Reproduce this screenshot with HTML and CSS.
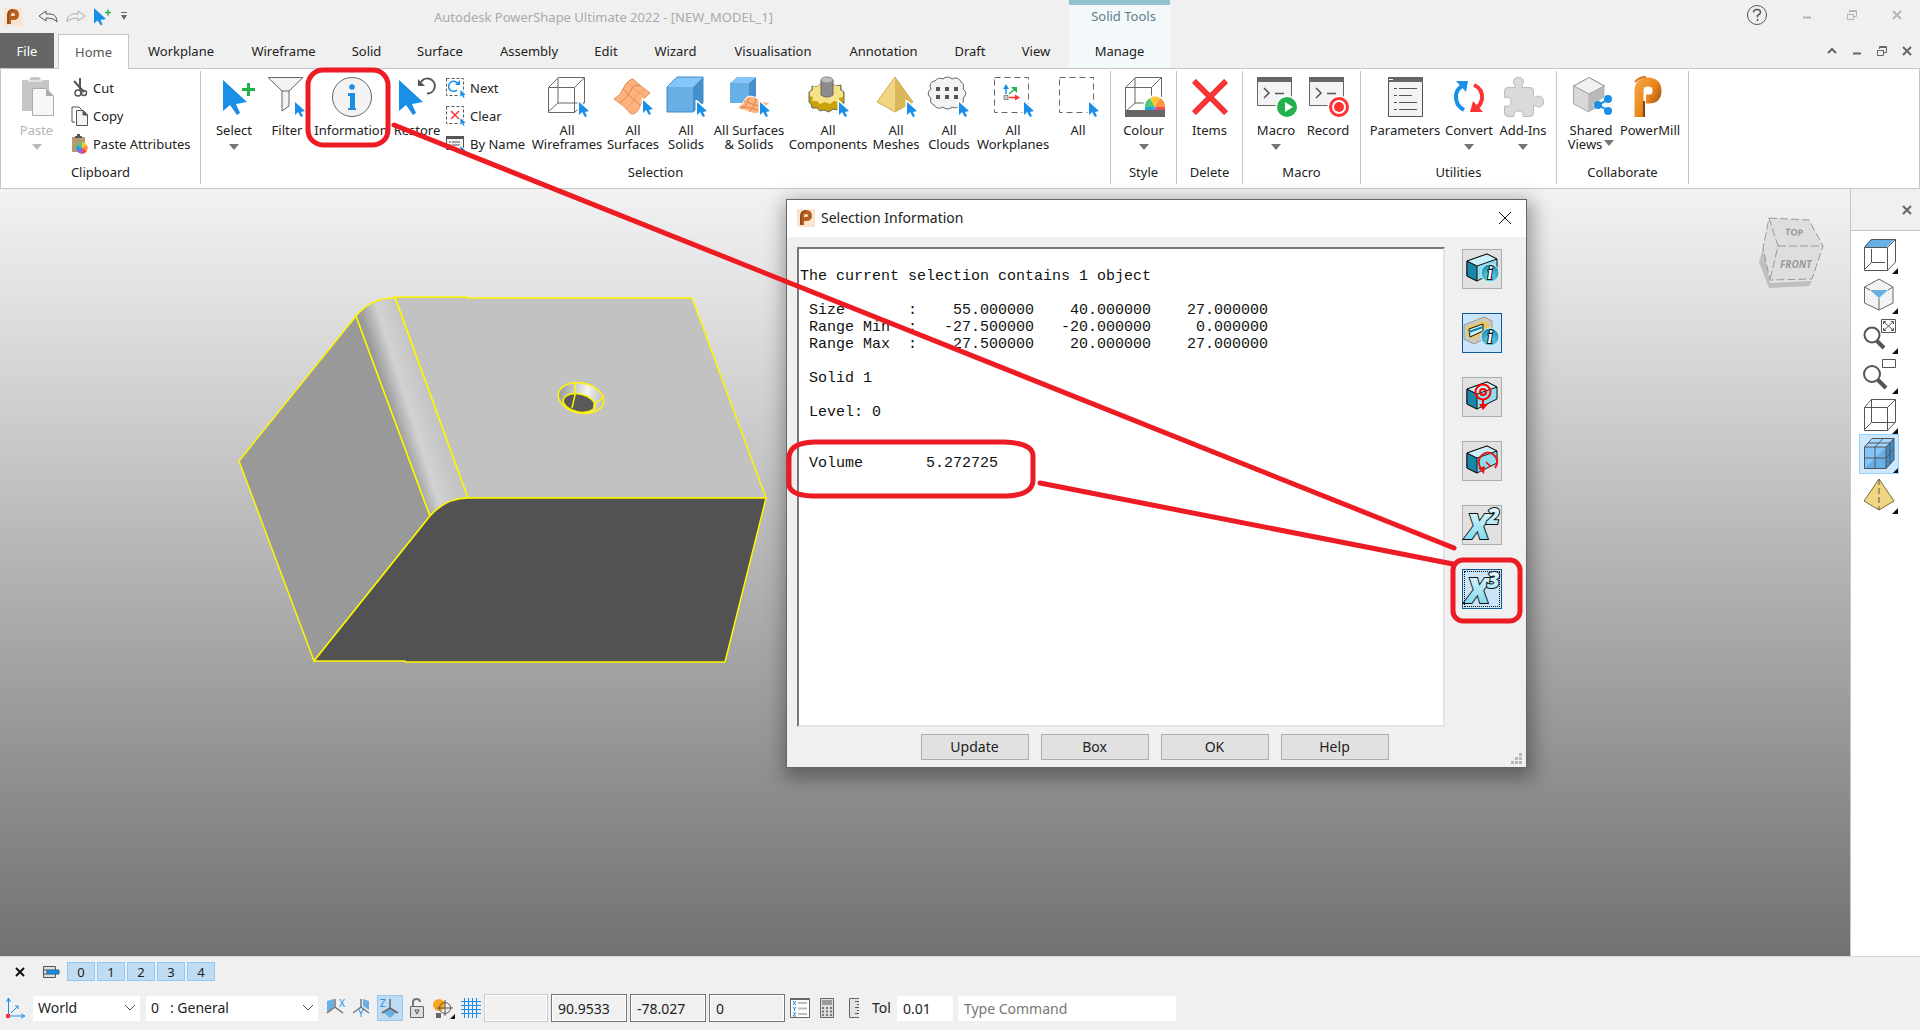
FILE: index.html
```
<!DOCTYPE html>
<html lang="en">
<head>
    <meta charset="UTF-8">
    <meta name="viewport" content="width=device-width, initial-scale=1.0">
    <title>Autodesk PowerShape Ultimate 2022 - [NEW_MODEL_1]</title>
    <link rel="stylesheet" href="styles.css">
</head>
<body>
    <!-- Shared symbols -->
    <svg class="sprite" aria-hidden="true">
        <defs>
            <linearGradient id="orange" x1="0" y1="0" x2="1" y2="1">
                <stop offset="0" stop-color="#f0a040"/><stop offset="0.5" stop-color="#ea8518"/><stop offset="1" stop-color="#8a4a1c"/>
            </linearGradient>
            <linearGradient id="aqua" x1="0" y1="0" x2="0" y2="1">
                <stop offset="0" stop-color="#fff"/><stop offset="1" stop-color="#5fd0ea"/>
            </linearGradient>
            <radialGradient id="ball" cx="0.5" cy="0.75" r="0.7">
                <stop offset="0" stop-color="#6fd6ee"/><stop offset="1" stop-color="#1c8fb3"/>
            </radialGradient>
            <symbol id="cursor" viewBox="0 0 24 36">
                <path d="M0 0V31L7 25L14 35L17 33L13 24L24 22Z" fill="#1a8fe8"/>
            </symbol>
            <symbol id="cursor-sm" viewBox="-2 -2 14 19">
                <path d="M0 0V13L3 10L6 15L8 14L6 10L10 9Z" fill="#1a8fe8" stroke="#fff" stroke-width="3" paint-order="stroke"/>
            </symbol>
            <symbol id="logo" viewBox="0 0 20 20">
                <rect x="1" y="1" width="18" height="18" fill="#fbe3cf"/>
                <path d="M6 17V8Q6 4 10 4Q14 4 14 8Q14 11 10 11H8" fill="none" stroke="#b5601f" stroke-width="4"/>
                <path d="M5 17V8Q5 3 10 3" fill="none" stroke="#7a3d14" stroke-width="1"/>
            </symbol>
            <symbol id="wirecube" viewBox="0 0 40 40">
                <g fill="none" stroke="#666" stroke-width="1">
                    <path d="M11 0.5V26H37M1 35L11 26" />
                    <path d="M1.5 10.5H27.5V35.5H1.5ZM1.5 10.5L11.5 0.5H37.5V26L27.5 35.5M27.5 10.5L37.5 0.5"/>
                </g>
            </symbol>
            <symbol id="box3d" viewBox="0 0 32 32">
                <g stroke="#111" stroke-width="1" stroke-linejoin="round">
                    <path d="M1 9L21 2L31 7V19L11 29L1 24Z" fill="#8fdcee"/>
                    <path d="M1 9L11 14V29L1 24Z" fill="#1a86a8"/>
                    <path d="M1 9L21 2L31 7L11 14Z" fill="#c9f1fa"/>
                </g>
            </symbol>
            <symbol id="infoball" viewBox="0 0 20 20">
                <circle cx="10" cy="10" r="9" fill="url(#ball)" stroke="#d6f3fa"/>
                <text x="10" y="16" class="ball-i">i</text>
            </symbol>
            <symbol id="chev" viewBox="0 0 12 8">
                <path d="M1 1L6 6L11 1" fill="none" stroke="#555" stroke-width="1"/>
            </symbol>
            <symbol id="restore-win" viewBox="0 0 12 12">
                <path d="M3.5 4V1.5H10.5V7.5H8M1 5.5H8M1.5 5V10.5H7.5V5M3 2.5H11" fill="none" stroke="currentColor" stroke-width="1"/>
            </symbol>
            <symbol id="close-win" viewBox="0 0 12 12">
                <path d="M2 2L10 10M10 2L2 10" fill="none" stroke="currentColor" stroke-width="2"/>
            </symbol>
            <symbol id="min-win" viewBox="0 0 12 12">
                <path d="M2 8.5H10" fill="none" stroke="currentColor" stroke-width="2"/>
            </symbol>
        </defs>
    </svg>

    <div class="app">
        <header class="titlebar">
            <div class="quick">
                <svg width="20" height="20"><use href="#logo"/></svg>
                <button aria-label="Undo"><svg width="20" height="14" fill="none" stroke="#555"><path d="M1 6L8 1V4H13Q19 5 19 12Q16 8 8 8V11Z"/></svg></button>
                <button aria-label="Redo"><svg width="20" height="14" fill="none" stroke="#aaa"><path d="M19 6L12 1V4H7Q1 5 1 12Q4 8 12 8V11Z"/></svg></button>
                <button aria-label="Select"><svg width="18" height="20"><use href="#cursor" x="0" y="1" width="12" height="18"/><path d="M11 5.5H17M14 2.5V8.5" stroke="#22b14c" stroke-width="1.5"/></svg></button>
                <button aria-label="Customise"><svg width="8" height="10" fill="#666"><path d="M1 0H7V1H1ZM1 3H7L4 8Z"/></svg></button>
            </div>
            <div class="title">Autodesk PowerShape Ultimate 2022 - [NEW_MODEL_1]</div>
            <div class="context-title">Solid Tools</div>
            <div class="winctl">
                <button aria-label="Help"><svg width="22" height="22" fill="none" stroke="#555"><circle cx="11" cy="11" r="9.5"/><path d="M7.5 8.5Q7.5 5.5 11 5.5Q14.5 5.5 14.5 8.5Q14.5 10 11.5 11.5V13.5M11.5 15V17" stroke-width="1.5"/></svg></button>
                <button aria-label="Minimise"><svg width="12" height="12"><use href="#min-win"/></svg></button>
                <button aria-label="Restore window"><svg width="12" height="12"><use href="#restore-win"/></svg></button>
                <button aria-label="Close"><svg width="12" height="12"><use href="#close-win"/></svg></button>
            </div>
        </header>

        <nav class="tabs">
            <button class="tab file">File</button>
            <button class="tab active">Home</button>
            <button class="tab">Workplane</button>
            <button class="tab">Wireframe</button>
            <button class="tab">Solid</button>
            <button class="tab">Surface</button>
            <button class="tab">Assembly</button>
            <button class="tab">Edit</button>
            <button class="tab">Wizard</button>
            <button class="tab">Visualisation</button>
            <button class="tab">Annotation</button>
            <button class="tab">Draft</button>
            <button class="tab">View</button>
            <button class="tab context">Manage</button>
            <div class="docctl">
                <button aria-label="Collapse ribbon"><svg width="12" height="12" fill="none" stroke="#666" stroke-width="2"><path d="M2 8L6 4L10 8"/></svg></button>
                <button aria-label="Minimise document"><svg width="12" height="12"><use href="#min-win"/></svg></button>
                <button aria-label="Restore document"><svg width="12" height="12"><use href="#restore-win"/></svg></button>
                <button aria-label="Close document"><svg width="12" height="12"><use href="#close-win"/></svg></button>
            </div>
        </nav>

        <section class="ribbon">
            <div class="group">
                <div class="tools clipboard">
                    <button class="tool disabled" disabled>
                        <svg class="icon"><path d="M5 3H12L14 0H22L24 3H32V34H5Z" fill="#c6c6c6"/><path d="M11 4H26" stroke="#fff"/><path d="M15.5 11.5H29L36.5 19V38.5H15.5Z" fill="#f7f7f7" stroke="#aaa"/><path d="M29 11.5V19H36.5Z" fill="#aaa"/></svg>
                        <span>Paste</span><i class="caret"></i>
                    </button>
                    <div class="small-tools">
                        <button class="small"><svg width="18" height="20" fill="none" stroke="#555"><path d="M3 3L13 14M9 0V12" stroke-width="2"/><circle cx="7" cy="15" r="3" stroke-width="1.5"/><circle cx="13" cy="15" r="2.5" stroke-width="1.5"/></svg>Cut</button>
                        <button class="small"><svg width="18" height="20" fill="#fff" stroke="#555"><path d="M4 16H1V1H8L11 4"/><path d="M5.5 4.5H12L16.5 9V19.5H5.5Z" fill="#f3f3f3"/><path d="M12 4.5V9H16.5Z" fill="#555"/></svg>Copy</button>
                        <button class="small"><svg width="18" height="20"><path d="M1 3H14V18H1Z" fill="#b59a72"/><path d="M4 2H6V0H9V2H11V4H4Z" fill="#555"/><g transform="translate(11 14)"><path d="M0 0V-6A6 6 0 0 1 5 -3Z" fill="#ffc533"/><path d="M0 0L5 -3A6 6 0 0 1 5 3Z" fill="#ff9040"/><path d="M0 0L5 3A6 6 0 0 1 0 6Z" fill="#e8504f"/><path d="M0 0V6A6 6 0 0 1 -5 3Z" fill="#9b5de5"/><path d="M0 0L-5 3A6 6 0 0 1 -5 -3Z" fill="#1f9fe0"/><path d="M0 0L-5 -3A6 6 0 0 1 0 -6Z" fill="#4fc878"/></g></svg>Paste Attributes</button>
                    </div>
                </div>
                <h2>Clipboard</h2>
            </div>

            <div class="group">
                <div class="tools selection">
                    <button class="tool"><svg class="icon"><use href="#cursor" x="9" y="3" width="24" height="36"/><path d="M28 12.5H41M34.5 6V19" stroke="#22b14c" stroke-width="3"/></svg><span>Select</span><i class="caret"></i></button>
                    <button class="tool"><svg class="icon"><path d="M1 0.5H36L22 14V29L15 34V14Z" fill="#f3f3f3" stroke="#666"/><path d="M15 14H22" stroke="#666"/><use href="#cursor-sm" x="26" y="23" width="14" height="19"/></svg><span>Filter</span></button>
                    <button class="tool"><svg class="icon"><circle cx="21" cy="20" r="19.5" fill="#f3f3f3" stroke="#666"/><circle cx="21" cy="10" r="2.8" fill="#1a8fe8"/><path d="M17 16H24V31H25V33H17V31H19V19H17Z" fill="#1a8fe8"/></svg><span>Information</span></button>
                    <button class="tool"><svg class="icon"><use href="#cursor" x="2" y="3" width="24" height="36"/><path d="M24 5A7.5 7.5 0 1 1 30 16.5" fill="none" stroke="#555" stroke-width="2"/><path d="M21 2V9H28Z" fill="#555"/></svg><span>Restore</span></button>
                    <div class="small-tools">
                        <button class="small"><svg width="20" height="20"><rect x="0.5" y="0.5" width="17" height="17" fill="none" stroke="#555" stroke-dasharray="3 2"/><path d="M11 12A5 5 0 1 1 12 6" fill="none" stroke="#1a8fe8" stroke-width="1.5"/><path d="M14 2V7H9Z" fill="#1a8fe8"/><use href="#cursor-sm" x="13" y="11" width="8" height="10"/></svg>Next</button>
                        <button class="small"><svg width="20" height="20"><rect x="0.5" y="0.5" width="17" height="17" fill="none" stroke="#555" stroke-dasharray="3 2"/><path d="M5 5L13 13M13 5L5 13" stroke="#f33" stroke-width="1.5"/><use href="#cursor-sm" x="13" y="11" width="8" height="10"/></svg>Clear</button>
                        <button class="small"><svg width="20" height="20"><path d="M0.5 2.5H17.5V15.5H0.5Z" fill="#f3f3f3" stroke="#555"/><path d="M0 3.5H18" stroke="#555" stroke-width="3"/><path d="M3 8H5M6 8H14M3 11H5M6 11H14" stroke="#555"/><use href="#cursor-sm" x="13" y="11" width="8" height="10"/></svg>By Name</button>
                    </div>
                    <button class="tool"><svg class="icon"><use href="#wirecube" width="40" height="40"/><use href="#cursor-sm" x="30" y="23" width="14" height="19"/></svg><span>All<br>Wireframes</span></button>
                    <button class="tool"><svg class="icon"><path d="M1 22Q8 18 10 12Q14 3 20 2Q26 8 37 16Q31 20 28 27Q24 38 18 37Q11 28 1 22Z" fill="#ffb27d" stroke="#e08e58"/><path d="M10 12Q17 20 27 28M7 26Q15 20 18 13T28 9" fill="none" stroke="#d88852"/><path d="M15 6Q22 14 33 20M13 32Q19 28 22 21T32 13" fill="none" stroke="#d88852" opacity="0.5"/><use href="#cursor-sm" x="28" y="21" width="14" height="19"/></svg><span>All<br>Surfaces</span></button>
                    <button class="tool"><svg class="icon"><path d="M1 10H27V35H1Z" fill="#67afe4"/><path d="M1 10L11 0H37L27 10Z" fill="#85c6fa"/><path d="M27 10L37 0V26L27 35Z" fill="#4590cc"/><path d="M1 10L11 0H37V26L27 35H1Z" fill="none" stroke="#3f8cc8"/><use href="#cursor-sm" x="29" y="23" width="14" height="19"/></svg><span>All<br>Solids</span></button>
                    <button class="tool"><svg class="icon"><path d="M1 6H20V26H1Z" fill="#67afe4"/><path d="M1 6L8 0H27L20 6Z" fill="#85c6fa"/><path d="M20 6L27 0V19L20 26Z" fill="#4590cc"/><path d="M6 31Q13 30 15 24Q18 17 25 20Q32 25 41 26Q34 30 32 36Q25 38 18 34Q12 32 6 31Z" fill="#ffb27d" stroke="#fff"/><path d="M15 24Q24 28 35 30M11 29Q22 31 33 34M20 21Q18 30 12 32M27 21Q26 30 20 35" fill="none" stroke="#d88852"/><use href="#cursor-sm" x="29" y="23" width="14" height="19"/></svg><span>All Surfaces<br>&amp; Solids</span></button>
                    <button class="tool"><svg class="icon"><path d="M1 15L4 13V9L9 10L12 7H25L28 9L33 8V13L36 15V26L32 29L30 33L25 32L21 35L16 33L12 34L9 31L4 31L3 27L1 25Z" fill="#c9a20a" stroke="#666"/><path d="M2 15L5 13V9L9 10L12 7H25L28 9L32 9V13L35 15V20L31 21V25L26 24L22 27L17 25L12 27L9 24L4 24L5 20L2 19Z" fill="#f5e188"/><path d="M13 3V18Q19 22 25 18V3Z" fill="#8c8c8c" stroke="#666"/><ellipse cx="19" cy="3" rx="6" ry="3" fill="#bdbdbd" stroke="#888"/><use href="#cursor-sm" x="29" y="23" width="14" height="19"/></svg><span>All<br>Components</span></button>
                    <button class="tool"><svg class="icon"><path d="M19 0L1 25L19 35Z" fill="#f0d583"/><path d="M19 0L37 25L19 35Z" fill="#d9b75a"/><path d="M19 0L1 25L19 35L37 25Z" fill="none" stroke="#cfae55"/><use href="#cursor-sm" x="29" y="23" width="14" height="19"/></svg><span>All<br>Meshes</span></button>
                    <button class="tool"><svg class="icon"><path d="M6 4A6 6 0 0 1 14 2A6 6 0 0 1 23 2A6 6 0 0 1 32 5A5 5 0 0 1 34 12A5 5 0 0 1 34 21A5 5 0 0 1 31 28A6 6 0 0 1 23 30A6 6 0 0 1 14 30A6 6 0 0 1 5 28A5 5 0 0 1 2 21A5 5 0 0 1 2 12A5 5 0 0 1 6 4Z" fill="#f3f3f3" stroke="#666"/><path d="M7 10h4v4H7zM16 10h4v4h-4zM25 10h4v4h-4zM7 18h4v4H7zM16 18h4v4h-4zM25 18h4v4h-4z" fill="#555"/><use href="#cursor-sm" x="28" y="23" width="14" height="19"/></svg><span>All<br>Clouds</span></button>
                    <button class="tool"><svg class="icon"><path d="M1.5 0.5H35.5V35.5H1.5Z" fill="none" stroke="#666" stroke-dasharray="6 4"/><path d="M11 18.5h4v4h-4z" fill="#ccc" stroke="#888"/><path d="M13 17V12" stroke="#1a8fe8" stroke-width="1.5"/><path d="M10 12L13 7L16 12Z" fill="#1a8fe8"/><path d="M16 20.5H22" stroke="#f33" stroke-width="1.5"/><path d="M22 17.5L27 20.5L22 23.5Z" fill="#f33"/><path d="M16 17L22 12" stroke="#22b14c" stroke-width="1.5"/><path d="M18 10H24V16Z" fill="#22b14c"/><use href="#cursor-sm" x="29" y="23" width="14" height="19"/></svg><span>All<br>Workplanes</span></button>
                    <button class="tool"><svg class="icon"><path d="M1.5 0.5H35.5V35.5H1.5Z" fill="none" stroke="#666" stroke-dasharray="6 4"/><use href="#cursor-sm" x="29" y="23" width="14" height="19"/></svg><span>All</span></button>
                </div>
                <h2>Selection</h2>
            </div>

            <div class="group">
                <div class="tools single">
                    <button class="tool"><svg class="icon"><use href="#wirecube" width="40" height="40"/><circle cx="31" cy="30" r="12" fill="#fff"/><g transform="translate(31 30)"><path d="M0 0L-10 4V0A10 10 0 0 1 -5 -9Z" fill="#4fc878"/><path d="M0 0L-5 -9A10 10 0 0 1 5 -9Z" fill="#ffc533"/><path d="M0 0L5 -9A10 10 0 0 1 10 0Z" fill="#ff9040"/><path d="M0 0H10V4H3Z" fill="#e8504f"/><path d="M0 0L3 4H-3Z" fill="#9b5de5"/><path d="M0 0L-3 4H-10V0Z" fill="#1fa8d8"/></g><path d="M1 33H41V40H1Z" fill="#666"/></svg><span>Colour</span><i class="caret"></i></button>
                </div>
                <h2>Style</h2>
            </div>

            <div class="group">
                <div class="tools single">
                    <button class="tool"><svg class="icon"><path d="M4 4L36 36M36 4L4 36" stroke="#d22" stroke-width="5.5"/><path d="M4 4L36 36M36 4L4 36" stroke="#f33" stroke-width="4"/></svg><span>Items</span></button>
                </div>
                <h2>Delete</h2>
            </div>

            <div class="group">
                <div class="tools macro">
                    <button class="tool"><svg class="icon"><path d="M1.5 0.5H35.5V28.5H1.5Z" fill="#f3f3f3" stroke="#666"/><path d="M1 0H36V5H1Z" fill="#666"/><path d="M8 11L13 16L8 21M19 16.5H28" fill="none" stroke="#555" stroke-width="1.5"/><circle cx="31" cy="30" r="11.5" fill="#fff"/><circle cx="31" cy="30" r="10" fill="#22b14c"/><path d="M29 25L37 30L29 35Z" fill="#fff"/></svg><span>Macro</span><i class="caret"></i></button>
                    <button class="tool"><svg class="icon"><path d="M1.5 0.5H35.5V28.5H1.5Z" fill="#f3f3f3" stroke="#666"/><path d="M1 0H36V5H1Z" fill="#666"/><path d="M8 11L13 16L8 21M19 16.5H28" fill="none" stroke="#555" stroke-width="1.5"/><circle cx="31" cy="30" r="11.5" fill="#fff"/><circle cx="31" cy="30" r="8.5" fill="#fff" stroke="#f33" stroke-width="3"/><circle cx="31" cy="30" r="5" fill="#f33"/></svg><span>Record</span></button>
                </div>
                <h2>Macro</h2>
            </div>

            <div class="group">
                <div class="tools utilities">
                    <button class="tool"><svg class="icon"><path d="M3.5 0.5H37.5V39.5H3.5Z" fill="#f3f3f3" stroke="#555"/><path d="M3 0H38V5H3Z" fill="#666"/><path d="M4 2.5H8" stroke="#fff"/><path d="M9 11.5H12M14 11.5H32M9 18.5H12M14 18.5H27M9 25.5H12M14 25.5H32M9 32.5H12M14 32.5H32" stroke="#555"/></svg><span>Parameters</span></button>
                    <button class="tool"><svg class="icon"><path d="M15 33Q6 28 7 18Q8 12 13 9" fill="none" stroke="#1a8fe8" stroke-width="4"/><path d="M7 4H19L17 15Z" fill="#1a8fe8"/><path d="M25 8Q34 12 33 22Q32 27 28 31" fill="none" stroke="#f33" stroke-width="4"/><path d="M34 35H21L24 24Z" fill="#f33"/></svg><span>Convert</span><i class="caret"></i></button>
                    <button class="tool"><svg class="icon"><path d="M1.5 14Q1.5 10.5 5 10.5H12Q12.5 8 10.5 6Q10 0.5 15.5 0.5Q21 0.5 20.5 6Q18.5 8 19 10.5H27Q30.5 10.5 30.5 14V20Q33 21 35 19Q40.5 19 40.5 25Q40.5 30 35 30Q33 28 30.5 29V36Q30.5 39.5 27 39.5H20Q21 34 15.5 34Q10 34 11 39.5H5Q1.5 39.5 1.5 36V29Q8 30 8 25Q8 19 1.5 20.5Z" fill="#dadada" stroke="#bbb"/></svg><span>Add-Ins</span><i class="caret"></i></button>
                </div>
                <h2>Utilities</h2>
            </div>

            <div class="group">
                <div class="tools collaborate">
                    <button class="tool"><svg class="icon"><path d="M2.5 9L18 0.5L33.5 9L18 17Z" fill="#f1f1f1" stroke="#888"/><path d="M2.5 9L18 17V35L2.5 27Z" fill="#d8d8d8" stroke="#aaa"/><path d="M33.5 9L18 17V35L33.5 27Z" fill="#b9b9b9"/><path d="M37 22L28 28L37 34" fill="none" stroke="#fff" stroke-width="7"/><path d="M37 22L28 28L37 34" fill="none" stroke="#1a8fe8" stroke-width="2"/><circle cx="37" cy="22" r="4" fill="#1a8fe8"/><circle cx="27" cy="28" r="4" fill="#1a8fe8"/><circle cx="37" cy="34" r="4" fill="#1a8fe8"/></svg><span>Shared<br>Views<i class="caret"></i></span></button>
                    <button class="tool"><svg class="icon"><path d="M9 40V14Q9 5 18 5Q27 5 27 14Q27 22 19 22H16" fill="none" stroke="url(#orange)" stroke-width="9"/><path d="M14 40V24" stroke="#7c4219" stroke-width="2"/><path d="M5 5Q9 0 16 0" fill="none" stroke="#d9781b" stroke-width="2"/></svg><span>PowerMill</span></button>
                </div>
                <h2>Collaborate</h2>
            </div>
        </section>

        <main class="workspace">
            <div class="viewport">
                <svg class="model" viewBox="236 294 534 372" aria-label="Solid block">
                    <defs>
                        <linearGradient id="fillet" gradientUnits="userSpaceOnUse" x1="392" y1="414" x2="430" y2="402">
                            <stop offset="0" stop-color="#9a9a9a"/><stop offset="0.45" stop-color="#d2d2d2"/><stop offset="1" stop-color="#c4c4c4"/>
                        </linearGradient>
                        <linearGradient id="bore" x1="0" y1="0" x2="1" y2="0">
                            <stop offset="0" stop-color="#999"/><stop offset="0.6" stop-color="#f4f4f4"/><stop offset="1" stop-color="#bbb"/>
                        </linearGradient>
                    </defs>
                    <g stroke="#fff500" stroke-width="1.5" stroke-linejoin="round">
                        <path d="M239 461L356 316L430 516L314 661Z" fill="#999"/>
                        <path d="M356 316Q372 297 395 298L468 498Q446 498 430 516Z" fill="url(#fillet)"/>
                        <path d="M395 297H467V298H692L766 498H468Z" fill="#c2c2c2"/>
                        <path d="M314 661L430 516Q446 498 468 498H766L725 662H405V661Z" fill="#525252"/>
                        <ellipse cx="581" cy="398" rx="23" ry="15" transform="rotate(12 581 398)" fill="url(#bore)"/>
                        <ellipse cx="579" cy="403" rx="16" ry="9" transform="rotate(12 579 403)" fill="#5a5a5a"/>
                        <path d="M575 382V395L572 408M594 404L603 398M594 404V410" fill="none"/>
                    </g>
                </svg>
                <svg class="viewcube" viewBox="1752 212 76 80" aria-label="View cube">
                    <path d="M1762 248L1769 283L1811 281L1808 286L1768 288L1758 262Z" fill="#999" opacity="0.5"/>
                    <path d="M1768 218L1808 220L1822 246L1811 279L1769 280L1762 248Z" fill="#dedede"/>
                    <path d="M1768 218L1808 220L1822 246L1811 279L1769 280L1762 248ZM1768 218L1777 246L1769 280M1777 246H1822" fill="none" stroke="#999" stroke-dasharray="8 3"/>
                    <text x="1784" y="235" class="cube-text" transform="rotate(3 1784 235)">TOP</text>
                    <text x="1779" y="268" class="cube-text front">FRONT</text>
                </svg>
            </div>
            <aside class="views">
                <div class="views-head"><button aria-label="Close views"><svg width="12" height="12"><use href="#close-win"/></svg></button></div>
                <button aria-label="View from top"><svg width="40" height="40"><path d="M5 13L12 5H36L28 13Z" fill="#67afe4"/><path d="M12.5 15V28.5H26M5 36L12 29M5.5 13.5H28.5V36.5H5.5ZM5.5 13.5L12.5 5.5H36.5V28L28.5 36.5M28.5 13.5L36.5 5.5" fill="none" stroke="#555"/><path d="M39 34V40H33Z" fill="#111"/></svg></button>
                <button aria-label="Isometric view"><svg width="40" height="40"><path d="M5.5 13L20 5L34 13V29L20 36L5.5 29Z" fill="#f3f3f3" stroke="#666"/><path d="M11 16H29L20 24Z" fill="#67afe4"/><path d="M5.5 13L11 16M34 13L29 16M20 24V36" fill="none" stroke="#666"/><path d="M39 34V40H33Z" fill="#111"/></svg></button>
                <button aria-label="Zoom full"><svg width="40" height="40"><circle cx="13" cy="21" r="7.5" fill="none" stroke="#555" stroke-width="2"/><path d="M18 27L25 34" stroke="#555" stroke-width="4"/><path d="M22.5 5.5H36.5V18.5H22.5Z" fill="#fff" stroke="#555"/><path d="M24.5 10V7.5H27M32 7.5H34.5V10M34.5 14V16.5H32M27 16.5H24.5V14M25 8L34 16M34 8L25 16" fill="none" stroke="#555"/><path d="M39 34V40H33Z" fill="#111"/></svg></button>
                <button aria-label="Zoom box"><svg width="40" height="40"><circle cx="13" cy="20" r="8" fill="none" stroke="#555" stroke-width="2"/><path d="M19 26L27 34" stroke="#555" stroke-width="4"/><path d="M23.5 5.5H36.5V13.5H23.5Z" fill="#fff" stroke="#555"/><path d="M39 34V40H33Z" fill="#111"/></svg></button>
                <button aria-label="Wireframe view"><svg width="40" height="40"><path d="M12.5 5V28.5H36M5 36L12 29M5.5 13.5H28.5V36.5H5.5ZM5.5 13.5L12.5 5.5H36.5V28L28.5 36.5M28.5 13.5L36.5 5.5" fill="none" stroke="#555"/><path d="M39 34V40H33Z" fill="#111"/></svg></button>
                <button class="on" aria-label="Shaded view"><svg width="40" height="40"><path d="M5 13H27V35H5Z" fill="#67afe4"/><path d="M5 13H27L5 35Z" fill="#85c6fa"/><path d="M5 13L13 4H35L27 13Z" fill="#a5d6ff"/><path d="M27 13L35 4V26L27 35Z" fill="#3f8cc8"/><path d="M5.5 13H27V34.5H5.5ZM5.5 13L13 4.5H35V26L27 34.5M27 13L35 4.5M16 13V34.5M5.5 24H27L35 15M16 13L24 4.5M9 9H31V30" fill="none" stroke="#555"/><path d="M39 34V40H33Z" fill="#111"/></svg></button>
                <button aria-label="Mesh view"><svg width="40" height="40"><path d="M20 5L5 27L20 36L35 27Z" fill="#f0d583" stroke="#7a6a3a"/><path d="M20 5V36" stroke="#555" stroke-dasharray="6 3"/><path d="M39 34V40H33Z" fill="#111"/></svg></button>
            </aside>
        </main>

        <footer class="bottom">
            <div class="layers">
                <button aria-label="Close levels"><svg width="10" height="10" stroke="#111" stroke-width="2"><path d="M1 1L9 9M9 1L1 9"/></svg></button>
                <svg class="layer-icon" width="18" height="14"><path d="M1.5 1.5H13.5V12.5H1.5Z" fill="#ddd" stroke="#555"/><path d="M1 5H5M1 9H5" stroke="#555"/><path d="M5 5H17V9H5Z" fill="#1a8fe8" stroke="#27608f"/></svg>
                <button class="level">0</button>
                <button class="level">1</button>
                <button class="level">2</button>
                <button class="level">3</button>
                <button class="level">4</button>
            </div>
            <div class="status">
                <svg class="axes" width="20" height="22" fill="none" stroke="#1a8fe8"><path d="M2.5 2V19H18M0.5 5L2.5 1L4.5 5M15 17L19 19L15 21M5 16L12 9M9 9H12V12"/><path d="M0 17H4V21H0Z" fill="#f33" stroke="none"/></svg>
                <div class="drop world">
                    <select aria-label="Workplane"><option>World</option></select>
                    <svg width="12" height="8"><use href="#chev"/></svg>
                </div>
                <div class="drop general">
                    <select aria-label="Level"><option>0 &nbsp; : General</option></select>
                    <svg width="12" height="8"><use href="#chev"/></svg>
                </div>
                <div class="planes">
                    <button aria-label="YZ plane"><svg width="24" height="24"><path d="M3 5L10 3V12L3 16Z" fill="#67afe4"/><path d="M11 3V11L19 17M11 11L3 17" fill="none" stroke="#777" stroke-width="1.5"/><text x="15" y="11" class="axis">X</text></svg></button>
                    <button aria-label="XZ plane"><svg width="24" height="24"><path d="M12 3L18 5V14L12 10Z" fill="#67afe4"/><path d="M10 3V11L18 17M10 11L2 17" fill="none" stroke="#777" stroke-width="1.5"/><text x="7" y="21" class="axis">Y</text></svg></button>
                    <button class="on" aria-label="XY plane"><svg width="24" height="24"><path d="M5 16L12 12L19 16L12 22Z" fill="#67afe4"/><path d="M12 3V12L20 17M12 12L4 17" fill="none" stroke="#666" stroke-width="1.5"/><text x="2" y="11" class="axis">Z</text></svg></button>
                    <button aria-label="Lock"><svg width="24" height="24"><path d="M5.5 10.5H18.5V21.5H5.5Z" fill="#ddd" stroke="#666"/><path d="M8 10V6Q8 3 11.5 3Q15 3 15 6" fill="none" stroke="#777" stroke-width="2"/><path d="M10 14H14L12 18Z" fill="none" stroke="#555"/></svg></button>
                    <button aria-label="Intelligent cursor"><svg width="24" height="24"><path d="M4 17H9V22H4Z" fill="#666"/><circle cx="7" cy="9" r="6" fill="#f9a61a"/><circle cx="13" cy="12" r="5.5" fill="none" stroke="#555"/><path d="M13 4V20M5 12H21" stroke="#555"/><path d="M23 18V23H18Z" fill="#111"/></svg></button>
                    <button aria-label="Grid"><svg width="24" height="24" stroke="#1a8fe8"><path d="M5.5 2V22M9.5 2V22M13.5 2V22M17.5 2V22M2 5.5H22M2 9.5H22M2 13.5H22M2 17.5H22"/></svg></button>
                </div>
                <div class="coords">
                    <input class="empty" type="text" aria-label="Name" disabled>
                    <input type="text" aria-label="X" value="90.9533">
                    <input type="text" aria-label="Y" value="-78.027">
                    <input type="text" aria-label="Z" value="0">
                </div>
                <div class="extras">
                    <button aria-label="Position"><svg width="20" height="20"><path d="M0.5 0.5H19.5V19.5H0.5Z" fill="#fff" stroke="#666"/><path d="M0 1H20" stroke="#666" stroke-width="2"/><path d="M8 5H17M8 10.5H17M8 16H17" stroke="#bbb" stroke-width="2"/><path d="M3 3L6 7M6 3L3 7M3 9L4.5 11L6 9M4.5 11V13M3 15H6L3 18H6" fill="none" stroke="#1a8fe8"/></svg></button>
                    <button aria-label="Calculator"><svg width="20" height="20"><path d="M3.5 0.5H16.5V19.5H3.5Z" fill="#ddd" stroke="#666"/><path d="M5 2H15V7H5Z" fill="#999"/><path d="M5 10H15M5 13.5H15M5 17H15" stroke="#777" stroke-width="2" stroke-dasharray="2 2"/></svg></button>
                    <button aria-label="Measure"><svg width="20" height="20"><path d="M15 0.5H5.5V19.5H15" fill="#e4e4e4" stroke="#666"/><path d="M11 3.5H15M13 6.5H15M11 9.5H15M13 12.5H15M11 15.5H15" stroke="#555"/></svg></button>
                </div>
                <label class="tol">Tol <input type="text" value="0.01"></label>
                <input class="command" type="text" placeholder="Type Command" aria-label="Command">
            </div>
        </footer>
    </div>

    <div class="dialog" role="dialog" aria-labelledby="dialog-title">
        <div class="dialog-head">
            <svg width="20" height="20"><use href="#logo"/></svg>
            <h1 id="dialog-title">Selection Information</h1>
            <button aria-label="Close dialog"><svg width="14" height="14" stroke="#111"><path d="M1 1L13 13M13 1L1 13"/></svg></button>
        </div>
        <div class="dialog-body">
            <textarea readonly aria-label="Selection details">

The current selection contains 1 object

 Size       :    55.000000    40.000000    27.000000
 Range Min  :   -27.500000   -20.000000     0.000000
 Range Max  :    27.500000    20.000000    27.000000

 Solid 1

 Level: 0


 Volume       5.272725</textarea>
            <div class="modes">
                <button aria-label="Object information"><svg width="40" height="40"><use href="#box3d" x="4" y="3" width="32" height="32"/><use href="#infoball" x="18" y="14" width="20" height="20"/></svg></button>
                <button class="on" aria-label="Bounding box"><svg width="40" height="40"><path d="M2 12L22 4L30 8V22L12 31L2 26Z" fill="#cfcab8" stroke="#999"/><path d="M5 14L22 8L27 11V18L12 25L6 24Z" fill="#e8c75a"/><path d="M7 16L21 11V18L8 24Z" fill="#c9f1fa" stroke="#111"/><path d="M7 19L21 14" stroke="#1a86a8" stroke-width="2"/><use href="#infoball" x="18" y="14" width="20" height="20"/></svg></button>
                <button aria-label="Centre of gravity"><svg width="40" height="40"><use href="#box3d" x="4" y="3" width="32" height="32"/><circle cx="21" cy="15" r="7.5" fill="none" stroke="#f00" stroke-width="2"/><circle cx="21" cy="15" r="3" fill="none" stroke="#f00" stroke-width="2"/><path d="M21 22V29" stroke="#f00" stroke-width="2"/><path d="M17 27H26L21 33Z" fill="#f00"/></svg></button>
                <button aria-label="Moments of inertia"><svg width="40" height="40"><use href="#box3d" x="4" y="3" width="32" height="32"/><path d="M33 27Q38 20 32 14Q26 9 20 14Q14 20 19 28" fill="none" stroke="#e21b1b" stroke-width="2"/><path d="M16 27L23 25L22 33Z" fill="#e21b1b"/><path d="M24 21L29 26" stroke="#f00" stroke-width="1.5"/></svg></button>
                <button aria-label="Surface area"><svg width="40" height="40"><text x="4" y="34" class="formula">X<tspan class="power" dx="-3" dy="-15">2</tspan></text></svg></button>
                <button class="on focus" aria-label="Volume"><svg width="40" height="40"><text x="4" y="34" class="formula">X<tspan class="power" dx="-3" dy="-15">3</tspan></text></svg></button>
            </div>
        </div>
        <div class="dialog-foot">
            <button>Update</button>
            <button>Box</button>
            <button>OK</button>
            <button>Help</button>
        </div>
        <svg class="grip" width="12" height="12" fill="#b8b8b8"><path d="M8 0h3v3H8zM4 4h3v3H4zM8 4h3v3H8zM0 8h3v3H0zM4 8h3v3H4zM8 8h3v3H8z"/></svg>
    </div>

    <!-- Red markup over the whole window -->
    <svg class="markup" viewBox="0 0 1920 1030" aria-hidden="true">
        <rect x="308" y="70" width="80" height="75" rx="15"/>
        <path d="M394 125L1454 548M1040 483L1453 564"/>
        <path d="M814 442H1004Q1033 443 1033 456V480Q1033 495 1006 496H812Q789 495 789 484V458Q789 443 814 442Z"/>
        <rect x="1453" y="560" width="67" height="61" rx="10"/>
    </svg>
</body>
</html>
```

FILE: styles.css
```
:root {
    --bg: #f0f0f0;
    --line: #c6c6c6;
    --blue-bg: #cce8ff;
    --blue-line: #99d1ff;
    --text: #222;
    --ui: "Noto Sans", "Open Sans", sans-serif;
}

* {
    box-sizing: border-box;
    margin: 0;
    padding: 0;
}

body {
    background: var(--bg);
    color: var(--text);
    font: 13px/14px var(--ui);
    overflow: hidden;
}

button,
input,
select,
textarea {
    font: inherit;
    color: inherit;
}

button {
    background: none;
    border: none;
}

svg {
    display: block;
    flex: none;
}

.sprite {
    position: absolute;
    width: 0;
    height: 0;
}

.app {
    display: grid;
    grid-template-rows: 33px 35px 121px 1fr auto;
    height: 100vh;
}

/* Title bar */
.titlebar {
    display: grid;
    grid-template-columns: 434px 635px 101px 1fr;
    align-items: center;
}

.quick {
    display: flex;
    align-items: center;
    gap: 8px;
    padding-left: 3px;
}

.quick button:first-of-type {
    margin-left: 7px;
}

.title {
    color: #aaa;
    white-space: nowrap;
}

.context-title {
    align-self: stretch;
    border-top: 5px solid #94c1cf;
    background: #f3f8fb;
    color: #5f7f89;
    text-align: center;
    padding: 4px 0 0 8px;
}

.winctl,
.docctl {
    display: flex;
    justify-content: flex-end;
    align-items: center;
}

.winctl {
    gap: 33px;
    padding: 0 17px 3px 0;
    color: #b5b5b5;
}

/* Tabs */
.tabs {
    display: grid;
    grid-template-columns: 54px 4px 71px 104px 101px 65px 82px 96px 58px 81px 114px 107px 66px 66px 101px 1fr;
}

.tab.active {
    grid-column: 3;
    background: #fff;
    border: 1px solid var(--line);
    border-bottom: none;
    margin: 1px 0 -1px;
    color: #555;
    z-index: 1;
}

.tab.file {
    background: #666;
    color: #fff;
}

.tab.context {
    background: #f3f8fb;
}

.docctl {
    gap: 13px;
    padding-right: 7px;
    color: #666;
}

/* Ribbon */
.ribbon {
    display: flex;
    background: #fff;
    border: 1px solid var(--line);
}

.group {
    display: flex;
    flex-direction: column;
    margin: 2px 0 4px;
    border-right: 1px solid var(--line);
}

.group h2 {
    font-size: 13px;
    font-weight: 400;
    text-align: center;
    padding-bottom: 5px;
}

.tools {
    display: grid;
    flex: 1;
    align-items: start;
    padding-top: 6px;
}

.clipboard {
    grid-template-columns: 69px 129px;
    padding-left: 1px;
}
.selection {
    grid-template-columns: 52px 54px 74px 58px 82px 78px 54px 52px 74px 84px 52px 54px 74px 56px;
    padding-right: 4px;
    padding-left: 7px;
}
.single { grid-template-columns: 65px; }
.macro { grid-template-columns: 52px 52px; padding-left: 7px; padding-right: 6px; }
.utilities { grid-template-columns: 74px 54px 54px; padding-left: 7px; padding-right: 6px; }
.collaborate { grid-template-columns: 58px 60px; padding-left: 5px; padding-right: 8px; }

.tool {
    display: flex;
    flex-direction: column;
    align-items: center;
    white-space: nowrap;
}

.icon {
    width: 40px;
    height: 40px;
    overflow: visible;
    margin-bottom: 6px;
}

.tool > span {
    display: block;
}

.caret {
    border: 5px solid transparent;
    border-top: 6px solid #757575;
    border-bottom: none;
    margin-top: 7px;
}

span .caret {
    display: inline-block;
    margin: 0 0 3px 2px;
}

.disabled {
    color: #b5b5b5;
}

.disabled .caret {
    border-top-color: #bbb;
}

.small-tools {
    display: flex;
    flex-direction: column;
    gap: 8px;
    padding-top: 1px;
}

.small {
    display: flex;
    align-items: center;
    gap: 4px;
    height: 20px;
    white-space: nowrap;
}

/* Workspace */
.workspace {
    display: grid;
    grid-template-columns: 1fr 70px;
}

.viewport {
    position: relative;
    background: linear-gradient(#f2f2f2, #e0e0e0 15%, #717171);
}

.model {
    position: absolute;
    left: 236px;
    top: 105px;
    width: 534px;
    height: 372px;
}

.viewcube {
    position: absolute;
    right: 21px;
    top: 23px;
    width: 76px;
    height: 80px;
}

.cube-text {
    font: bold 9px "Open Sans", sans-serif;
    fill: #999;
}

.cube-text.front {
    font-size: 10px;
    font-style: italic;
}

.views {
    background: #fff;
    border-left: 1px solid var(--line);
    display: flex;
    flex-direction: column;
}

.views-head {
    display: flex;
    justify-content: flex-end;
    align-items: center;
    height: 42px;
    margin-bottom: 3px;
    padding-right: 7px;
    background: var(--bg);
    border-bottom: 1px solid var(--line);
    color: #666;
}

.views > button {
    width: 40px;
    height: 40px;
    margin-left: 8px;
}

.views > .on {
    background: var(--blue-bg);
    outline: 1px solid var(--blue-line);
    outline-offset: -1px;
}

/* Bottom bars */
.bottom {
    border-top: 1px solid #d5d5d5;
}

.layers {
    display: flex;
    align-items: center;
    gap: 2px;
    height: 29px;
    padding: 0 15px;
}

.layer-icon {
    margin: 0 5px 0 15px;
}

.level {
    width: 28px;
    height: 19px;
    background: #c0dcf3;
    border: 1px solid #90c8f6;
}

.status {
    display: flex;
    align-items: center;
    height: 44px;
    padding-left: 6px;
    font-size: 14px;
    line-height: 20px;
}

.axes {
    margin-right: 7px;
}

.drop {
    display: grid;
    grid-template-columns: 1fr 21px;
    align-items: center;
    height: 25px;
    margin-right: 6px;
    background: #fff;
}

.drop select {
    grid-area: 1 / 1 / 2 / 3;
    height: 25px;
    padding-left: 5px;
    border: none;
    background: none;
    appearance: none;
}

.drop svg {
    grid-area: 1 / 2;
    justify-self: center;
    pointer-events: none;
}

.world { width: 107px; }
.general { width: 172px; }

.planes {
    display: flex;
    gap: 3px;
    margin-right: 1px;
}

.planes .on {
    background: #c0dcf3;
    outline: 1px solid #90c8f6;
}

.axis {
    font: 10px/10px var(--ui);
    fill: #1a8fe8;
}

.coords {
    display: flex;
    gap: 3px;
    margin-right: 5px;
}

.coords input {
    width: 76px;
    height: 28px;
    padding: 0 6px;
    background: var(--bg);
    border: 1px solid #777;
    box-shadow: inset 0 0 0 1px #fff;
}

.coords .empty {
    width: 64px;
    border-color: #ccc;
}

.extras {
    display: flex;
    gap: 7px;
    margin-right: 8px;
}

.tol {
    display: flex;
    align-items: center;
    gap: 6px;
    margin-right: 5px;
}

.tol input,
.command {
    height: 25px;
    padding: 0 6px;
    border: none;
    background: #fff;
}

.tol input {
    width: 56px;
}

.command {
    width: 218px;
}

.command::placeholder {
    color: #777;
}

/* Floating dialog */
.dialog {
    position: absolute;
    left: 786px;
    top: 199px;
    width: 741px;
    background: var(--bg);
    border: 1px solid #666;
    box-shadow: 2px 6px 18px 4px rgba(0, 0, 0, 0.35);
    font-size: 14px;
    line-height: 20px;
}

.dialog-head {
    display: flex;
    align-items: center;
    height: 37px;
    padding: 0 14px 2px 9px;
    gap: 5px;
    background: #fff;
}

.dialog-head h1 {
    flex: 1;
    font-size: 14px;
    font-weight: 400;
}

.dialog-body {
    display: grid;
    grid-template-columns: 1fr 40px;
    gap: 17px;
    padding: 10px 24px 0 10px;
}

.dialog-body textarea {
    height: 480px;
    padding: 2px 1px;
    border: 2px solid;
    border-color: #777 #e3e3e3 #e3e3e3 #777;
    background: #fff;
    color: #111;
    font: 15px/17px "Liberation Mono", monospace;
    resize: none;
    outline: none;
    white-space: pre;
    overflow: hidden;
}

.modes {
    display: flex;
    flex-direction: column;
    gap: 24px;
    padding-top: 2px;
}

.modes button {
    width: 40px;
    height: 40px;
    background: #e1e1e1;
    box-shadow: inset 0 0 0 1px #adadad;
}

.modes svg {
    overflow: visible;
}

.modes .on {
    background: #cce4f7;
    box-shadow: inset 0 0 0 1px #0a5a9c;
}

.modes .focus {
    outline: 1px dotted #111;
    outline-offset: -3px;
}

.ball-i {
    font: italic bold 18px "Liberation Serif", serif;
    fill: #fff;
    stroke: #111;
    stroke-width: 2px;
    paint-order: stroke;
    text-anchor: middle;
}

.formula {
    font: italic 900 36px "Noto Sans", sans-serif;
    fill: url(#aqua);
    stroke: #111;
    stroke-width: 2px;
    paint-order: stroke;
}

.power {
    font-size: 22px;
}

.dialog-foot {
    display: flex;
    justify-content: center;
    gap: 12px;
    padding: 7px 4px 7px 0;
}

.dialog-foot button {
    width: 108px;
    height: 26px;
    background: #e1e1e1;
    border: 1px solid #adadad;
}

.grip {
    position: absolute;
    right: 3px;
    bottom: 2px;
}

.markup {
    position: absolute;
    left: 0;
    top: 0;
    width: 1920px;
    height: 1030px;
    fill: none;
    stroke: #ed1c24;
    stroke-width: 5px;
    stroke-linecap: round;
    pointer-events: none;
}
```
